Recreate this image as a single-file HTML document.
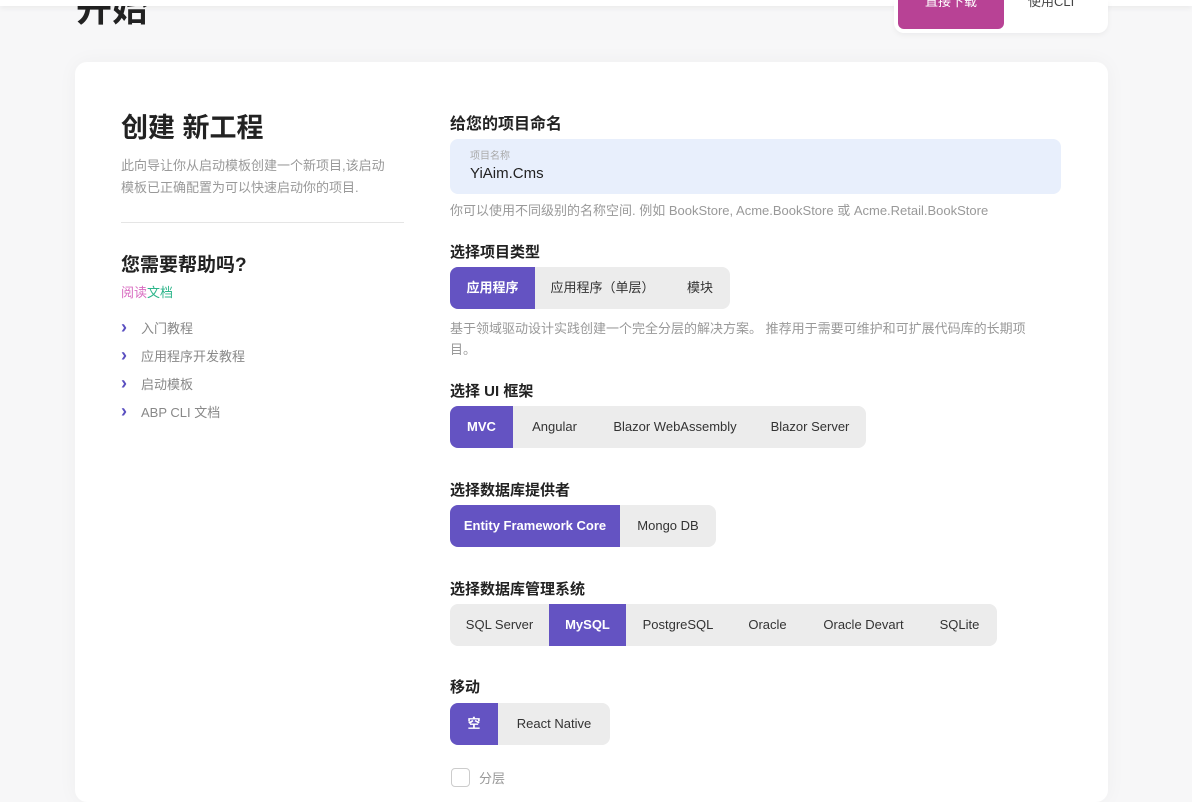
<!DOCTYPE html>
<html><head><meta charset="utf-8"><style>
*{margin:0;padding:0;box-sizing:border-box}
body{width:1192px;height:781px;overflow:hidden;background:#f7f7f8;font-family:"Liberation Sans","Noto Sans CJK SC",sans-serif;position:relative;color:#222}
.a{position:absolute;white-space:nowrap}
.topbar{position:absolute;left:0;top:0;width:1192px;height:6px;background:#fff;box-shadow:0 2px 6px rgba(0,0,0,.06)}
.card{position:absolute;left:75px;top:62px;width:1033px;height:740px;background:#fff;border-radius:12px;box-shadow:0 0 20px rgba(0,0,0,.04)}
.h3{font-size:16px;font-weight:bold;color:#222}
.grp{position:absolute;height:42px;background:#ececec;border-radius:8px;display:flex;overflow:hidden;left:450px}
.grp div{height:42px;line-height:42px;text-align:center;font-size:13px;color:#333}
.grp .on{background:#6453c2;color:#fff;font-weight:bold}
.help{font-size:13px;color:#999}
.li{font-size:13px;color:#888;left:141px}
.chev{left:121px;color:#5a4fc0;font-size:18px;font-weight:bold;line-height:18px}
</style></head><body>
<div class="a" style="left:76px;top:-20px;font-size:36px;font-weight:bold;color:#222">开始</div>
<div class="a" style="left:138px;top:3px;width:26px;height:2px;background:#7a46c4"></div>
<div class="topbar"></div>
<div class="a" style="left:894px;top:0;width:214px;height:33px;background:#fff;border-radius:0 0 10px 10px;box-shadow:0 2px 6px rgba(0,0,0,.05)"></div>
<div class="a" style="left:898px;top:0;width:106px;height:29px;background:#b84295;border-radius:0 0 6px 6px;color:#fff;font-size:13px;text-align:center;line-height:16px;overflow:hidden"><span style="position:relative;top:-6px">直接下载</span></div>
<div class="a" style="left:1028px;top:-6px;font-size:13px;color:#444;line-height:16px">使用CLI</div>
<div class="card"></div>
<div class="a" style="left:121px;top:106px;font-size:27px;font-weight:bold;color:#222">创建 新工程</div>
<div class="a" style="left:121px;top:155px;font-size:13px;color:#999;line-height:22px;white-space:normal;width:276px">此向导让你从启动模板创建一个新项目,该启动模板已正确配置为可以快速启动你的项目.</div>
<div class="a" style="left:121px;top:222px;width:283px;height:1px;background:#e5e5e5"></div>
<div class="a" style="left:121px;top:250px;font-size:19px;font-weight:bold;color:#222">您需要帮助吗?</div>
<div class="a" style="left:121px;top:282px;font-size:13px"><span style="color:#d86bc0">阅读</span><span style="color:#2cb58a">文档</span></div>
<div class="a chev" style="top:318px">›</div><div class="a li" style="top:318px">入门教程</div>
<div class="a chev" style="top:346px">›</div><div class="a li" style="top:346px">应用程序开发教程</div>
<div class="a chev" style="top:374px">›</div><div class="a li" style="top:374px">启动模板</div>
<div class="a chev" style="top:402px">›</div><div class="a li" style="top:402px">ABP CLI 文档</div>

<div class="a h3" style="left:450px;top:110px">给您的项目命名</div>
<div class="a" style="left:450px;top:139px;width:611px;height:55px;background:#e8effc;border-radius:8px"></div>
<div class="a" style="left:470px;top:147px;font-size:10px;color:#aaa">项目名称</div>
<div class="a" style="left:470px;top:165px;font-size:15px;color:#222">YiAim.Cms</div>
<div class="a help" style="left:450px;top:200px">你可以使用不同级别的名称空间. 例如 BookStore, Acme.BookStore 或 Acme.Retail.BookStore</div>

<div class="a h3" style="left:450px;top:241px;font-size:15px">选择项目类型</div>
<div class="grp" style="top:267px"><div class="on" style="width:85px">应用程序</div><div style="width:135px">应用程序（单层）</div><div style="width:60px">模块</div></div>
<div class="a help" style="left:450px;top:318px;line-height:21px;white-space:normal;width:590px">基于领域驱动设计实践创建一个完全分层的解决方案。 推荐用于需要可维护和可扩展代码库的长期项目。</div>

<div class="a h3" style="left:450px;top:380px;font-size:15px">选择 UI 框架</div>
<div class="grp" style="top:406px"><div class="on" style="width:63px">MVC</div><div style="width:83px">Angular</div><div style="width:158px">Blazor WebAssembly</div><div style="width:112px">Blazor Server</div></div>

<div class="a h3" style="left:450px;top:479px;font-size:15px">选择数据库提供者</div>
<div class="grp" style="top:505px"><div class="on" style="width:170px">Entity Framework Core</div><div style="width:96px">Mongo DB</div></div>

<div class="a h3" style="left:450px;top:578px;font-size:15px">选择数据库管理系统</div>
<div class="grp" style="top:604px"><div style="width:99px">SQL Server</div><div class="on" style="width:77px">MySQL</div><div style="width:104px">PostgreSQL</div><div style="width:75px">Oracle</div><div style="width:117px">Oracle Devart</div><div style="width:75px">SQLite</div></div>

<div class="a h3" style="left:450px;top:676px;font-size:15px">移动</div>
<div class="grp" style="top:703px"><div class="on" style="width:48px">空</div><div style="width:112px">React Native</div></div>

<div class="a" style="left:451px;top:768px;width:19px;height:19px;border:1px solid #ccc;border-radius:4px;background:#fff"></div>
<div class="a" style="left:479px;top:768px;font-size:13px;color:#999">分层</div>
</body></html>
